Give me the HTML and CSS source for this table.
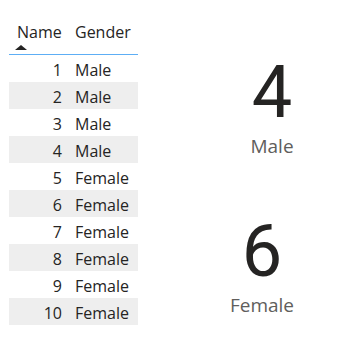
FILE: index.html
```html
<!DOCTYPE html>
<html>
<head>
<meta charset="utf-8">
<link rel="stylesheet" href="styles.css">
</head>
<body>
<div class="page">
  <div class="table">
    <div class="head">
      <div class="hcell c1">
        <div class="htext">Name</div>
        <div class="sort"></div>
      </div>
      <div class="hcell c2">
        <div class="htext">Gender</div>
      </div>
    </div>
    <div class="row"><div class="cell c1">1</div><div class="cell c2">Male</div></div>
    <div class="row alt"><div class="cell c1">2</div><div class="cell c2">Male</div></div>
    <div class="row"><div class="cell c1">3</div><div class="cell c2">Male</div></div>
    <div class="row alt"><div class="cell c1">4</div><div class="cell c2">Male</div></div>
    <div class="row"><div class="cell c1">5</div><div class="cell c2">Female</div></div>
    <div class="row alt"><div class="cell c1">6</div><div class="cell c2">Female</div></div>
    <div class="row"><div class="cell c1">7</div><div class="cell c2">Female</div></div>
    <div class="row alt"><div class="cell c1">8</div><div class="cell c2">Female</div></div>
    <div class="row"><div class="cell c1">9</div><div class="cell c2">Female</div></div>
    <div class="row alt"><div class="cell c1">10</div><div class="cell c2">Female</div></div>
  </div>
  <div class="cards">
    <div class="card card-male">
      <div class="value">4</div>
      <div class="label">Male</div>
    </div>
    <div class="card card-female">
      <div class="value">6</div>
      <div class="label">Female</div>
    </div>
  </div>
</div>
</body>
</html>
```
FILE: styles.css
```css
html, body {
  margin: 0;
  padding: 0;
  background: #ffffff;
}
.page {
  display: flex;
  width: 349px;
  height: 349px;
}
.table {
  margin-left: 9px;
  width: 129px;
  font-family: "Open Sans", sans-serif;
  font-size: 16px;
  color: #252423;
}
.head {
  display: flex;
  padding-top: 22px;
  box-sizing: border-box;
  height: 55px;
  border-bottom: 1px solid #5daef5;
}
.hcell {
  line-height: 20px;
}
.head .c1 {
  width: 59px;
  padding-left: 8px;
  box-sizing: border-box;
}
.head .c2 {
  padding-left: 7px;
}
.sort {
  width: 0;
  height: 0;
  margin-top: 3px;
  margin-left: -2px;
  border-left: 6px solid transparent;
  border-right: 6px solid transparent;
  border-bottom: 5px solid #252423;
}
.row {
  display: flex;
  height: 27px;
  box-sizing: border-box;
  padding-top: 3px;
  line-height: 24px;
}
.row.alt {
  background: #eeeeee;
}
.cell.c1 {
  width: 59px;
  box-sizing: border-box;
  text-align: right;
  padding-right: 6px;
}
.cell.c2 {
  padding-left: 7px;
}
.cards {
  display: flex;
  flex-direction: column;
  align-items: flex-start;
  padding-top: 56px;
}
.card {
  width: 150px;
  display: flex;
  flex-direction: column;
  align-items: center;
}
.card-male {
  margin-left: 59px;
}
.card-female {
  margin-left: 49px;
  margin-top: 57px;
}
.value {
  font-family: "Roboto", sans-serif;
  font-weight: 400;
  font-size: 72px;
  line-height: 73px;
  color: #252423;
}
.label {
  font-family: "Open Sans", sans-serif;
  font-size: 19px;
  line-height: 24px;
  margin-top: 5px;
  color: #605e5c;
}
```
